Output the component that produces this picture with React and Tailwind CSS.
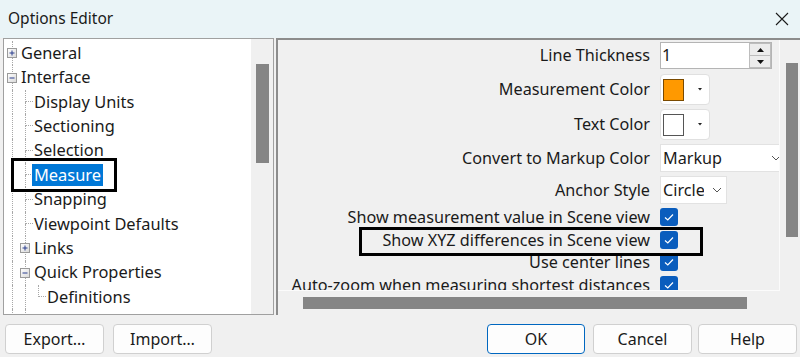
import React from "react";

const FONT = { fontFamily: '"Noto Sans", "Open Sans", sans-serif' };

function Box({ minus }) {
  return (
    <svg width="10" height="10" viewBox="0 0 10 10" className="block">
      <defs>
        <linearGradient id={minus ? "gm" : "gp"} x1="0" y1="0" x2="1" y2="1">
          <stop offset="0" stopColor="#ffffff" />
          <stop offset="1" stopColor="#d8d8d8" />
        </linearGradient>
      </defs>
      <rect x="0.5" y="0.5" width="9" height="9" fill={`url(#${minus ? "gm" : "gp"})`} stroke="#9a9a9a" />
      <line x1="2.5" y1="5" x2="7.5" y2="5" stroke="#2a3f8f" strokeWidth="1" />
      {!minus && <line x1="5" y1="2.5" x2="5" y2="7.5" stroke="#2a3f8f" strokeWidth="1" />}
    </svg>
  );
}

const LINE = "border-[#a8a8a8] border-dotted";

function VCell({ w, off }) {
  return (
    <div className="h-full shrink-0 flex" style={{ width: w }}>
      <div className={`h-full border-l ${LINE}`} style={{ marginLeft: off }} />
    </div>
  );
}

function BranchCell({ w, off, len, last }) {
  return (
    <div className="h-full shrink-0 flex flex-col" style={{ width: w }}>
      <div className="flex-1 flex items-end">
        <div className={`h-full border-l ${LINE}`} style={{ marginLeft: off }} />
        <div className={`border-t ${LINE}`} style={{ width: len }} />
      </div>
      <div className="flex-1 flex">
        {!last && <div className={`h-full border-l ${LINE}`} style={{ marginLeft: off }} />}
      </div>
    </div>
  );
}

function BoxCell({ w, off, minus }) {
  return (
    <div className="relative h-full shrink-0 flex" style={{ width: w }}>
      <div className={`h-full border-l ${LINE}`} style={{ marginLeft: off }} />
      <div className="absolute top-1/2 -translate-y-1/2" style={{ left: off - 5 }}>
        <Box minus={minus} />
      </div>
    </div>
  );
}

function TreeRow({ children }) {
  return <div className="flex items-center h-[24.4px] text-[16.4px] text-[#1a1a1a] whitespace-nowrap">{children}</div>;
}

function Tree() {
  const lvl1 = ["Display Units", "Sectioning", "Selection", "Measure", "Snapping", "Viewpoint Defaults"];
  return (
    <div className="flex-1 min-w-0 bg-white pt-[2px] overflow-hidden">
      <TreeRow>
        <BoxCell w={16} off={8} />
        <span className="ml-[1px]">General</span>
      </TreeRow>
      <TreeRow>
        <BoxCell w={16} off={8} minus />
        <span className="ml-[1px]">Interface</span>
      </TreeRow>
      {lvl1.map((l) => (
        <TreeRow key={l}>
          <VCell w={16} off={8} />
          <BranchCell w={14} off={5} len={7} />
          {l === "Measure" ? (
            <span className="-ml-[2px] px-[2px] h-[22px] leading-[22px] bg-[#0078d7] text-white">{l}</span>
          ) : (
            <span>{l}</span>
          )}
        </TreeRow>
      ))}
      <TreeRow>
        <VCell w={16} off={8} />
        <BoxCell w={14} off={5} />
        <span>Links</span>
      </TreeRow>
      <TreeRow>
        <VCell w={16} off={8} />
        <BoxCell w={14} off={5} minus />
        <span>Quick Properties</span>
      </TreeRow>
      <TreeRow>
        <VCell w={16} off={8} />
        <VCell w={14} off={5} />
        <BranchCell w={13} off={4} len={7} last />
        <span>Definitions</span>
      </TreeRow>
      <div className="flex h-[24px]">
        <VCell w={16} off={8} />
        <VCell w={14} off={5} />
      </div>
    </div>
  );
}

function Check() {
  return (
    <div className="w-[18px] h-[18px] rounded-[3px] bg-[#0a5dbd] flex items-center justify-center">
      <svg width="18" height="18" viewBox="0 0 18 18">
        <polyline points="5,9.5 7.8,12 13,6.5" fill="none" stroke="white" strokeWidth="1.2" />
      </svg>
    </div>
  );
}

function Tiny() {
  return (
    <svg width="4" height="3" viewBox="0 0 4 3" className="block">
      <polygon points="0,0 4,0 2,2.5" fill="#222" />
    </svg>
  );
}

function Chevron() {
  return (
    <svg width="10" height="6" viewBox="0 0 10 6" className="block">
      <polyline points="1,1 5,5 9,1" fill="none" stroke="#555" strokeWidth="1" />
    </svg>
  );
}

function ColorBtn({ color, border }) {
  return (
    <div className="w-[50px] h-[31px] bg-white border border-[#e0e0e0] rounded-[4px] flex items-center">
      <div className="ml-[2px] w-[21px] h-[22px] border" style={{ backgroundColor: color, borderColor: border }} />
      <div className="ml-[14px]">
        <Tiny />
      </div>
    </div>
  );
}

function Row({ label, h, mt, children }) {
  return (
    <div className="flex items-center shrink-0" style={{ height: h, marginTop: mt }}>
      <div className="w-[372px] shrink-0 text-right whitespace-nowrap text-[16.2px] text-[#1a1a1a]">{label}</div>
      <div className="ml-[10px] flex items-center shrink-0">{children}</div>
    </div>
  );
}

export default function App() {
  return (
    <div className="relative w-[800px] h-[357px] bg-[#f0f0f0] flex flex-col overflow-hidden" style={FONT}>
      {/* Title bar */}
      <div className="h-[38px] shrink-0 bg-[#eaf4f7] flex items-center justify-between pl-[8px] pr-[10px]">
        <span className="text-[15.5px] text-[#1a1a1a]">Options Editor</span>
        <svg width="14" height="14" viewBox="0 0 14 14" className="mr-[1px]">
          <path d="M1 1 L13 13 M13 1 L1 13" stroke="#1a1a1a" strokeWidth="1.1" />
        </svg>
      </div>

      {/* Main */}
      <div className="h-[277px] shrink-0 flex">
        {/* Left tree panel */}
        <div className="ml-[3px] w-[271px] shrink-0 flex border border-[#a0a0a0]">
          <Tree />
          <div className="w-[22px] bg-[#f0f0f0] shrink-0">
            <div className="ml-[5px] mt-[25px] w-[13px] h-[99px] bg-[#858585]" />
          </div>
        </div>

        {/* Right panel */}
        <div className="ml-[2px] flex-1 min-w-0 flex border-l-2 border-t-2 border-[#8c8c8c]">
          <div className="flex-1 min-w-0 flex flex-col">
            <div className="h-[251px] shrink-0 overflow-hidden flex flex-col border-r border-b border-[#fbfbfb]">
              <Row label="Line Thickness" h={27} mt={2}>
                <div className="w-[112px] h-[27px] bg-white border border-[#b4b4b4] flex">
                  <span className="flex-1 pl-[1px] text-[16.2px] leading-[25px] text-[#1a1a1a]">1</span>
                  <div className="w-[22px] flex flex-col">
                    <div className="flex-1 bg-[#ececec] border border-[#bdbdbd] flex items-center justify-center">
                      <svg width="7" height="4" viewBox="0 0 7 4"><polygon points="0,4 7,4 3.5,0" fill="#111" /></svg>
                    </div>
                    <div className="flex-1 bg-[#ececec] border border-t-0 border-[#bdbdbd] flex items-center justify-center">
                      <svg width="7" height="4" viewBox="0 0 7 4"><polygon points="0,0 7,0 3.5,4" fill="#111" /></svg>
                    </div>
                  </div>
                </div>
              </Row>
              <Row label="Measurement Color" h={31} mt={5}>
                <ColorBtn color="#ff9900" border="#7a4a00" />
              </Row>
              <Row label="Text Color" h={31} mt={4}>
                <ColorBtn color="#ffffff" border="#555555" />
              </Row>
              <Row label="Convert to Markup Color" h={28} mt={4}>
                <div className="w-[126px] h-[28px] bg-white border border-[#e2e2e2] flex items-center">
                  <span className="pl-[2px] text-[16.2px] text-[#1a1a1a]">Markup</span>
                  <div className="ml-auto mr-[4px]"><Chevron /></div>
                </div>
              </Row>
              <Row label="Anchor Style" h={28} mt={4}>
                <div className="w-[67px] h-[28px] bg-white border border-[#e2e2e2] flex items-center overflow-hidden">
                  <span className="pl-[2px] w-[43px] shrink-0 overflow-hidden text-[16.2px] text-[#1a1a1a] whitespace-nowrap">Circle</span>
                  <div className="ml-[8px]"><Chevron /></div>
                </div>
              </Row>
              <Row label="Show measurement value in Scene view" h={22.5} mt={2}>
                <Check />
              </Row>
              <Row label="Show XYZ differences in Scene view" h={22.5}>
                <Check />
              </Row>
              <Row label="Use center lines" h={22.5}>
                <Check />
              </Row>
              <Row label="Auto-zoom when measuring shortest distances" h={22.5}>
                <Check />
              </Row>
            </div>
            <div className="flex-1">
              <div className="ml-[25px] mt-[6px] w-[444px] h-[12px] bg-[#858585]" />
            </div>
          </div>
          <div className="w-[20px] shrink-0">
            <div className="ml-[6px] mt-[23px] w-[12px] h-[174px] bg-[#858585]" />
          </div>
        </div>
      </div>

      {/* Buttons */}
      <div className="mt-[9px] flex text-[16px] text-[#1a1a1a]">
        <button className="ml-[5px] w-[99px] h-[30px] bg-[#fdfdfd] border border-[#d0d0d0] rounded-[4px]">Export…</button>
        <button className="ml-[9px] w-[99px] h-[30px] bg-[#fdfdfd] border border-[#d0d0d0] rounded-[4px]">Import…</button>
        <button className="ml-auto w-[98px] h-[30px] bg-[#fdfdfd] border border-[#0067c0] rounded-[4px]">OK</button>
        <button className="ml-[8px] w-[99px] h-[30px] bg-[#fdfdfd] border border-[#d0d0d0] rounded-[4px]">Cancel</button>
        <button className="ml-[6px] mr-[3px] w-[99px] h-[30px] bg-[#fdfdfd] border border-[#d0d0d0] rounded-[4px]">Help</button>
      </div>

      {/* Annotation boxes */}
      <div className="absolute left-[11px] top-[158px] w-[106px] h-[34px] border-[3px] border-black" />
      <div className="absolute left-[359px] top-[227px] w-[344px] h-[29px] border-[3px] border-black" />
    </div>
  );
}
